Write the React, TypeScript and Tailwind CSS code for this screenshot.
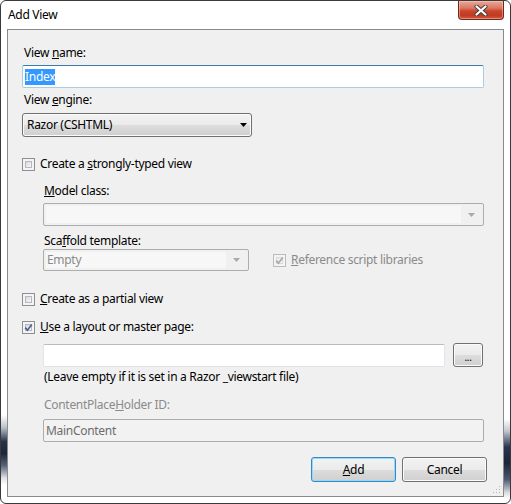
import clsx from 'clsx'
import type { ReactNode } from 'react'

const btnFace = 'bg-[linear-gradient(#f2f2f2_0%,#ebebeb_50%,#dddddd_50%,#cfcfcf_100%)]'

function Check({ checked, disabled }: { checked?: boolean; disabled?: boolean }) {
  return (
    <span
      className={clsx(
        'relative flex-none w-[13px] h-[13px] border bg-[#f4f4f4]',
        disabled ? 'border-[#bcbcbc]' : 'border-[#8e8f8f]'
      )}
    >
      <span
        className={clsx(
          'absolute inset-[2px] border',
          disabled
            ? 'border-[#dadada] bg-[linear-gradient(135deg,#e8e8e8,#f9f9f9)]'
            : 'border-[#b6bac0] bg-[linear-gradient(135deg,#d6d9dd,#f8f8f8)]'
        )}
      />
      {checked && (
        <svg viewBox="0 0 11 11" className="absolute inset-0 w-[11px] h-[11px]">
          <path
            d="M2.2 5.6 L4.4 8.2 L8.8 2.4"
            fill="none"
            stroke={disabled ? '#a8a8a8' : '#4a5f97'}
            strokeWidth="1.7"
          />
        </svg>
      )}
    </span>
  )
}

function Arrow({ color }: { color: string }) {
  return (
    <svg width="7" height="4" viewBox="0 0 7 4" className="flex-none">
      <polygon points="0,0 7,0 3.5,4" fill={color} />
    </svg>
  )
}

function Button({ children, primary, className }: { children: ReactNode; primary?: boolean; className?: string }) {
  return (
    <div
      className={clsx(
        'flex items-center justify-center rounded-[3px] border',
        btnFace,
        primary
          ? 'border-[#3c86c4] shadow-[inset_0_0_0_1px_#8fdcf8]'
          : 'border-[#707070] shadow-[inset_0_0_0_1px_#fbfbfb]',
        className
      )}
    >
      {children}
    </div>
  )
}

function DisabledCombo({ text, className }: { text?: string; className?: string }) {
  return (
    <div className={clsx('flex items-center rounded-[2px] border border-[#adadad] bg-[#f0f0f0] p-[2px]', className)}>
      <div className="flex-1 h-full bg-[#f7f7f7] flex items-center pl-[1px] text-[#8a8a8a]">{text}</div>
      <div className="w-[20px] flex justify-center">
        <Arrow color="#a9a9a9" />
      </div>
    </div>
  )
}

export default function App() {
  return (
    <div className="relative w-[511px] h-[504px] overflow-hidden rounded-[6px] border border-[#3a3a3a] bg-white px-[6px] pb-[6px] flex flex-col font-['Segoe_UI','Noto_Sans',sans-serif] text-[12px] leading-[16px] tracking-[-0.3px] text-black">
      {/* glass bleed on the frame edges */}
      <div className="absolute left-0 top-[414px] w-[6px] h-[70px] bg-[linear-gradient(transparent,#b9c0cb_18%,#27324a_38%,#1d2538_55%,#56627a_72%,#dfe2e6_90%,transparent)]" />
      <div className="absolute right-0 top-[418px] w-[6px] h-[80px] bg-[linear-gradient(transparent,#c2c7cf_15%,#2a3550_35%,#1d2538_55%,#4a5670_75%,#d9dce1_92%,transparent)]" />

      {/* title bar */}
      <div className="h-[28px] flex items-start justify-between flex-none">
        <span className="mt-[6px] pl-[1px]">Add View</span>
        <div className="w-[46px] h-[19px] rounded-b-[4px] border border-t-0 border-[#6e2a1f] bg-[linear-gradient(#eaa999_0%,#dc7562_40%,#c8462c_55%,#c13a20_80%,#d45b3d_100%)] shadow-[inset_0_0_0_1px_rgba(255,210,200,0.45)] flex items-center justify-center">
          <svg width="14" height="11" viewBox="0 0 14 11">
            <path d="M2.5 1.5 L11.5 9.5 M11.5 1.5 L2.5 9.5" stroke="#3d3d3d" strokeWidth="4" strokeLinecap="round" />
            <path d="M2.5 1.5 L11.5 9.5 M11.5 1.5 L2.5 9.5" stroke="#ffffff" strokeWidth="2.2" strokeLinecap="round" />
          </svg>
        </div>
      </div>

      {/* client area */}
      <div className="relative flex-1 border border-[#8a8a8a] bg-[#f0f0f0] flex flex-col">
        <div className="mt-[15px] ml-[16px]">
          View <span className="underline">n</span>ame:
        </div>
        <div className="mt-[4px] ml-[14px] w-[462px] h-[23px] rounded-[2px] border border-[#a9cbe6] border-t-[#3d7bad] bg-white flex items-center pl-[2px]">
          <span className="bg-[#3399ff] text-white">Index</span>
        </div>

        <div className="mt-[4px] ml-[16px]">
          View <span className="underline">e</span>ngine:
        </div>
        <div className={clsx('mt-[5px] ml-[14px] w-[230px] h-[24px] rounded-[3px] border border-[#707070] shadow-[inset_0_0_0_1px_#fbfbfb] flex items-center justify-between pl-[4px] pr-[4px]', btnFace)}>
          <span>Razor (CSHTML)</span>
          <Arrow color="#000000" />
        </div>

        <div className="mt-[19px] ml-[14px] h-[16px] flex items-center gap-[5px]">
          <Check />
          <span>
            Create a <span className="underline">s</span>trongly-typed view
          </span>
        </div>

        <div className="mt-[11px] ml-[36px]">
          <span className="underline">M</span>odel class:
        </div>
        <DisabledCombo className="mt-[4px] ml-[35px] w-[441px] h-[23px]" />

        <div className="mt-[7px] ml-[36px]">
          Sca<span className="underline">f</span>fold template:
        </div>
        <div className="ml-[35px] h-[22px] flex items-center">
          <DisabledCombo text="Empty" className="w-[206px] h-[22px]" />
          <div className="ml-[24px] flex items-center gap-[5px] text-[#8a8a8a]">
            <Check checked disabled />
            <span>
              <span className="underline">R</span>eference script libraries
            </span>
          </div>
        </div>

        <div className="mt-[20px] ml-[14px] h-[16px] flex items-center gap-[5px]">
          <Check />
          <span>
            <span className="underline">C</span>reate as a partial view
          </span>
        </div>

        <div className="mt-[12px] ml-[14px] h-[16px] flex items-center gap-[5px]">
          <Check checked />
          <span>
            <span className="underline">U</span>se a layout or master page:
          </span>
        </div>

        <div className="mt-[8px] ml-[35px] h-[24px] flex items-start gap-[8px]">
          <div className="mt-[1px] w-[402px] h-[23px] rounded-[2px] border border-[#dfe3ea] border-t-[#b9bcc3] bg-white" />
          <Button className="w-[30px] h-[24px] text-[10px] leading-[10px] pt-[3px]">...</Button>
        </div>

        <div className="mt-[2px] ml-[36px]">(Leave empty if it is set in a Razor _viewstart file)</div>

        <div className="mt-[12px] ml-[36px] text-[#8a8a8a]">
          ContentPlace<span className="underline">H</span>older ID:
        </div>
        <div className="mt-[6px] ml-[35px] w-[441px] h-[23px] rounded-[2px] border border-[#adadad] bg-[#f2f2f2] flex items-center pl-[2px] text-[#6d6d6d]">
          MainContent
        </div>

        <div className="mt-[15px] pr-[16px] flex justify-end gap-[6px]">
          <Button primary className="w-[85px] h-[25px]">
            <span>
              <span className="underline">A</span>dd
            </span>
          </Button>
          <Button className="w-[85px] h-[25px]">Cancel</Button>
        </div>

        {/* size grip */}
        <svg width="9" height="9" viewBox="0 0 9 9" className="absolute right-[2px] bottom-[2px]">
          <g fill="#b4b4b4">
            <rect x="7" y="1" width="1" height="1" />
            <rect x="7" y="4" width="1" height="1" />
            <rect x="4" y="4" width="1" height="1" />
            <rect x="7" y="7" width="1" height="1" />
            <rect x="4" y="7" width="1" height="1" />
            <rect x="1" y="7" width="1" height="1" />
          </g>
        </svg>
      </div>
    </div>
  )
}
